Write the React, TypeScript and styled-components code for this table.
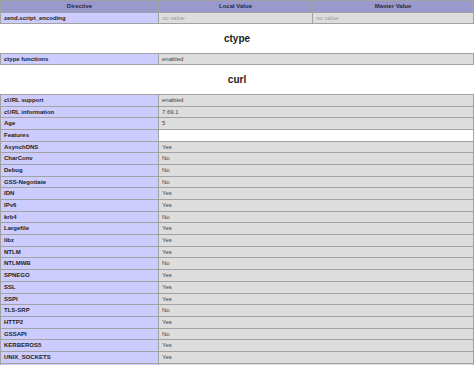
import React from 'react';
import styled, { createGlobalStyle } from 'styled-components';

const GlobalStyle = createGlobalStyle`
  html, body {
    margin: 0;
    padding: 0;
    background: #fff;
    color: #222;
    font-family: "Liberation Sans", Arial, sans-serif;
  }
`;

const Page = styled.div`
  width: 474px;
  overflow: hidden;
`;

const Table = styled.table`
  width: 100%;
  border-collapse: collapse;
  table-layout: fixed;
  font-size: 6px;
`;

const Cell = styled.td<{ $kind: 'h' | 'e' | 'v' | 'blank' }>`
  height: 10.68px;
  padding: 0 3px;
  border: 1px solid #a2a2a2;
  line-height: 10.68px;
  white-space: nowrap;
  overflow: hidden;
  vertical-align: middle;
  text-align: ${(p) => (p.$kind === 'h' ? 'center' : 'left')};
  font-weight: ${(p) => (p.$kind === 'h' || p.$kind === 'e' ? 'bold' : 'normal')};
  background: ${(p) =>
    p.$kind === 'h'
      ? '#9999cc'
      : p.$kind === 'e'
      ? '#ccccff'
      : p.$kind === 'v'
      ? '#dddddd'
      : '#ffffff'};
  color: ${(p) => (p.$kind === 'h' ? '#2a2a44' : p.$kind === 'v' ? '#444' : '#222')};
`;

const NoValue = styled.i`
  color: #9a9a9a;
`;

const SectionTitle = styled.h2<{ $offset?: number }>`
  margin: 0;
  height: 28.4px;
  line-height: 30.5px;
  text-align: center;
  font-size: 10px;
  font-weight: bold;
  color: #222;
`;

const curlRows: [string, string | null][] = [
  ['cURL support', 'enabled'],
  ['cURL information', '7.69.1'],
  ['Age', '5'],
  ['Features', null],
  ['AsynchDNS', 'Yes'],
  ['CharConv', 'No'],
  ['Debug', 'No'],
  ['GSS-Negotiate', 'No'],
  ['IDN', 'Yes'],
  ['IPv6', 'Yes'],
  ['krb4', 'No'],
  ['Largefile', 'Yes'],
  ['libz', 'Yes'],
  ['NTLM', 'Yes'],
  ['NTLMWB', 'No'],
  ['SPNEGO', 'Yes'],
  ['SSL', 'Yes'],
  ['SSPI', 'Yes'],
  ['TLS-SRP', 'No'],
  ['HTTP2', 'Yes'],
  ['GSSAPI', 'No'],
  ['KERBEROS5', 'Yes'],
  ['UNIX_SOCKETS', 'Yes'],
];

const Cols3 = () => (
  <colgroup>
    <col style={{ width: 158 }} />
    <col style={{ width: 154 }} />
    <col />
  </colgroup>
);

const Cols2 = () => (
  <colgroup>
    <col style={{ width: 158 }} />
    <col />
  </colgroup>
);

export default function App() {
  return (
    <Page>
      <GlobalStyle />
      <Table>
        <Cols3 />
        <tbody>
          <tr>
            <Cell as="th" $kind="h">Directive</Cell>
            <Cell as="th" $kind="h">Local Value</Cell>
            <Cell as="th" $kind="h">Master Value</Cell>
          </tr>
          <tr>
            <Cell $kind="e">zend.script_encoding</Cell>
            <Cell $kind="v"><NoValue>no value</NoValue></Cell>
            <Cell $kind="v"><NoValue>no value</NoValue></Cell>
          </tr>
        </tbody>
      </Table>

      <SectionTitle>ctype</SectionTitle>
      <Table>
        <Cols2 />
        <tbody>
          <tr>
            <Cell $kind="e">ctype functions</Cell>
            <Cell $kind="v">enabled</Cell>
          </tr>
        </tbody>
      </Table>

      <SectionTitle>curl</SectionTitle>
      <Table>
        <Cols2 />
        <tbody>
          {curlRows.map(([name, value]) => (
            <tr key={name}>
              <Cell $kind="e">{name}</Cell>
              <Cell $kind={value === null ? 'blank' : 'v'}>{value}</Cell>
            </tr>
          ))}
          <tr>
            <Cell $kind="e" />
            <Cell $kind="v" />
          </tr>
        </tbody>
      </Table>
    </Page>
  );
}
